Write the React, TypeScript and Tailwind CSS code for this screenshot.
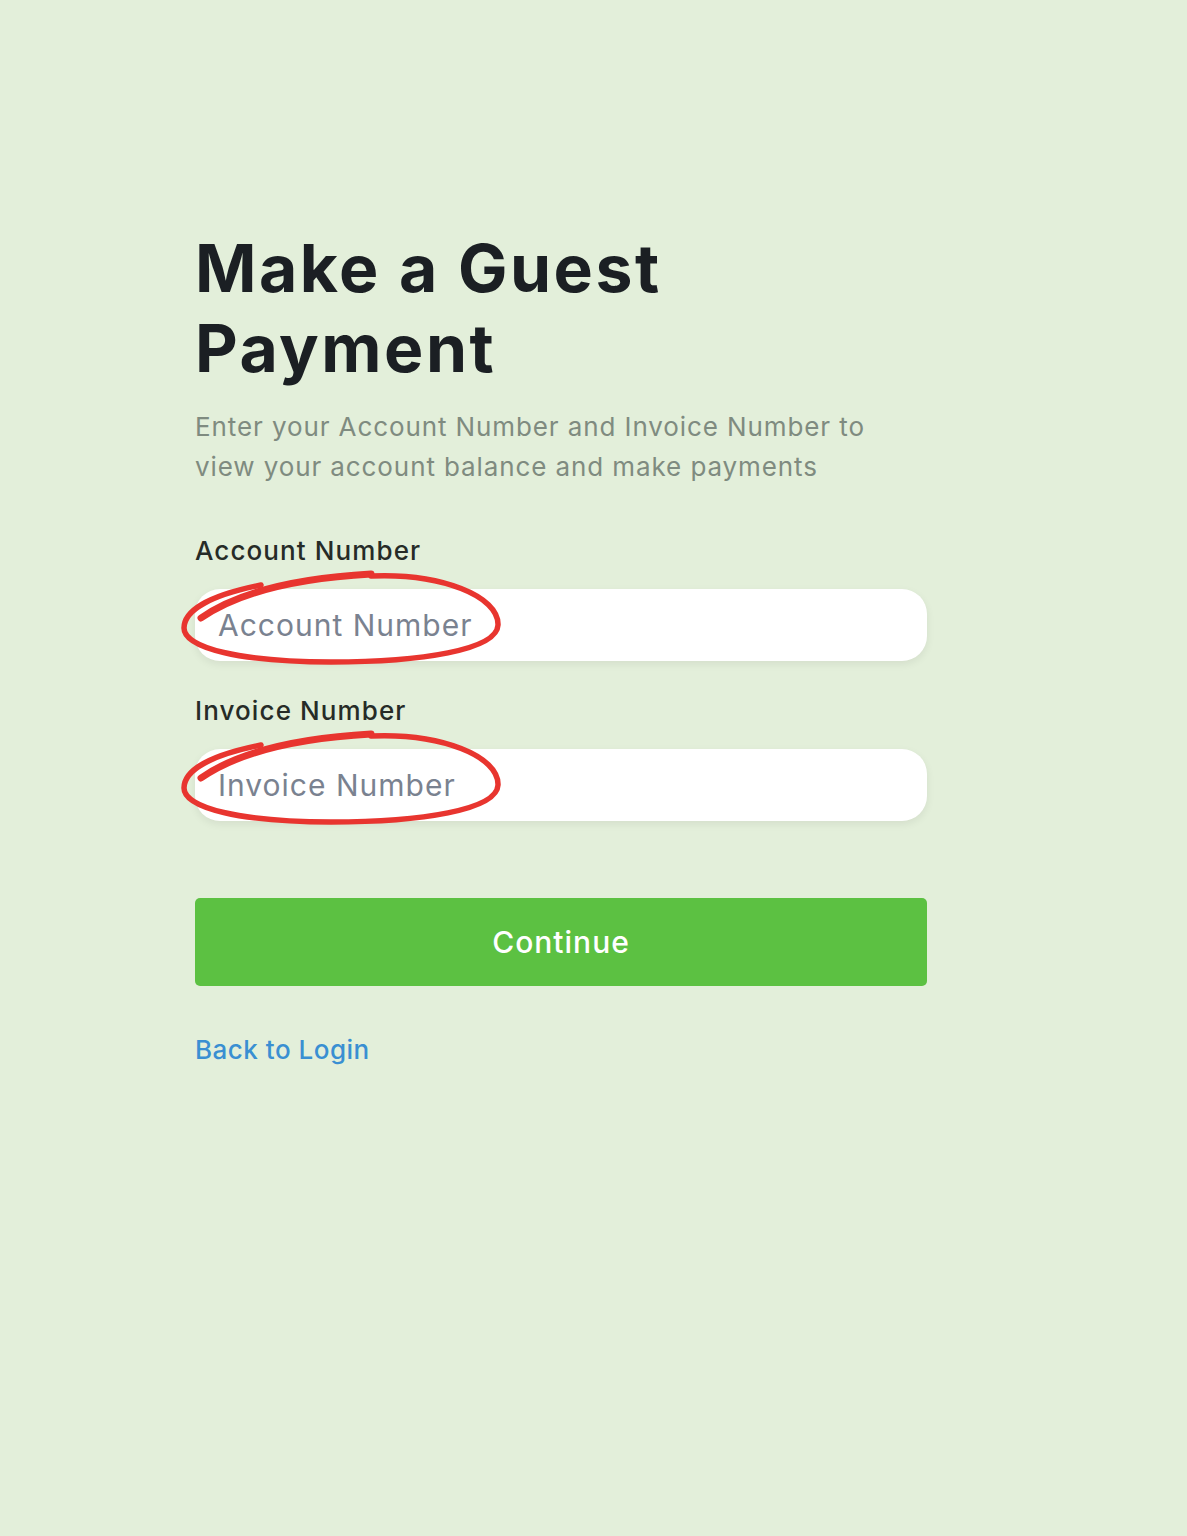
import React from "react";

function Circle() {
  return (
    <svg
      className="absolute pointer-events-none"
      style={{ left: -19, top: -20 }}
      width={340}
      height={100}
      viewBox="0 0 340 100"
      fill="none"
    >
      <path
        d="M 25 49 C 65 21, 125 9, 195 5"
        stroke="#e8352f"
        strokeWidth={7}
        strokeLinecap="round"
      />
      <path
        d="M 195 7 C 265 4, 323 27, 322 56 C 321 81, 245 93, 155 93 C 65 93, 8 79, 8 59 C 8 41, 35 26, 85 16"
        stroke="#e8352f"
        strokeWidth={5.5}
        strokeLinecap="round"
      />
    </svg>
  );
}

function Field({ label, placeholder }: { label: string; placeholder: string }) {
  return (
    <div className="flex flex-col">
      <label className="text-[26px] leading-[36px] tracking-[1.1px] text-[#262b27] font-medium">{label}</label>
      <div className="relative mt-[20px]">
        <input
          className="w-full h-[72px] rounded-[25px] bg-white pl-[23px] text-[30px] tracking-[1px] text-[#6e7686] placeholder:text-[#7a8290] shadow-[0_3px_8px_rgba(0,0,0,0.07)] outline-none"
          placeholder={placeholder}
        />
        <Circle />
      </div>
    </div>
  );
}

export default function App() {
  return (
    <div
      className="min-h-[1536px] w-full bg-[#e3efda]"
      style={{ fontFamily: '"Inter", "Open Sans", sans-serif' }}
    >
      <div className="pl-[195px] pt-[228px] w-[927px]">
        <h1 className="text-[66px] leading-[80px] font-bold text-[#1b1f23] tracking-[2.5px]">
          Make a Guest
          <br />
          Payment
        </h1>
        <p className="mt-[19px] text-[26px] leading-[40px] tracking-[0.9px] text-[#7f8b80]">
          Enter your Account Number and Invoice Number to
          <br />
          view your account balance and make payments
        </p>
        <div className="mt-[46px] flex flex-col gap-[32px]">
          <Field label="Account Number" placeholder="Account Number" />
          <Field label="Invoice Number" placeholder="Invoice Number" />
        </div>
        <button className="mt-[77px] w-full h-[88px] rounded-[5px] bg-[#5cc142] text-white text-[30px] tracking-[1px] font-medium">
          Continue
        </button>
        <div className="mt-[46px]">
          <a className="text-[26px] font-medium tracking-[0.5px] text-[#3a8fd2] leading-[36px]">Back to Login</a>
        </div>
      </div>
    </div>
  );
}
